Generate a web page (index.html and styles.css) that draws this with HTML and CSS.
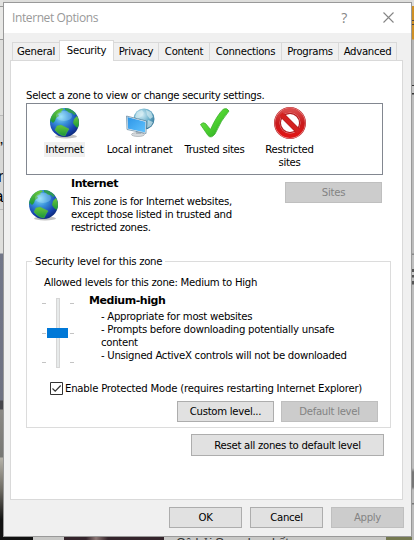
FILE: index.html
```html
<!DOCTYPE html>
<html lang="en">
<head>
<meta charset="utf-8">
<title>Internet Options</title>
<link rel="stylesheet" href="styles.css">
</head>
<body>
<svg class="defs" width="0" height="0" aria-hidden="true">
  <defs>
    <radialGradient id="ocean" cx=".38" cy=".3" r=".75">
      <stop offset="0" stop-color="#8fdcf5"/>
      <stop offset=".35" stop-color="#3a93dc"/>
      <stop offset=".75" stop-color="#1745b0"/>
      <stop offset="1" stop-color="#0c2776"/>
    </radialGradient>
    <radialGradient id="pale" cx=".4" cy=".3" r=".75">
      <stop offset="0" stop-color="#d5eef6"/>
      <stop offset=".5" stop-color="#6fb2cd"/>
      <stop offset="1" stop-color="#2b6e92"/>
    </radialGradient>
    <linearGradient id="land" x1="0" y1="0" x2="0" y2="1">
      <stop offset="0" stop-color="#6cc83c"/>
      <stop offset="1" stop-color="#18963a"/>
    </linearGradient>
    <linearGradient id="screen" x1="0" y1="0" x2="1" y2="1">
      <stop offset="0" stop-color="#2b93e6"/>
      <stop offset="1" stop-color="#62c4ff"/>
    </linearGradient>
    <linearGradient id="tick" x1="0" y1="0" x2="1" y2="1">
      <stop offset="0" stop-color="#7fea55"/>
      <stop offset=".5" stop-color="#4cd02f"/>
      <stop offset="1" stop-color="#219a25"/>
    </linearGradient>
    <linearGradient id="red" x1="0" y1="0" x2="0" y2="1">
      <stop offset="0" stop-color="#d94a4a"/>
      <stop offset=".5" stop-color="#c81a1c"/>
      <stop offset="1" stop-color="#e01515"/>
    </linearGradient>
    <symbol id="globe" viewBox="0 0 32 32">
      <ellipse cx="17" cy="29.4" rx="11" ry="2" fill="#777" opacity=".45"/>
      <circle cx="15.5" cy="15.5" r="14.5" fill="url(#ocean)"/>
      <path d="M4 7C6 4 9 1.700 13 1.200L15 2.500 12 4 13 5 9 7 10 9 7 11 6 14 4 16 2 14 1.200 16C1 12.500 2 9.500 4 7Z" fill="url(#land)"/>
      <path d="M16 1C21 1 25 4 27 7L25 8 23 6 20 6 18 4 16 3Z" fill="#2f9b55"/>
      <path d="M28 9C30.500 13 30.500 18 28.500 21L26 19 24 16 25 12Z" fill="url(#land)"/>
      <path d="M8 19 12 18 16 20 20 22 18 25 16 29 12 28 9 26 6 23Z" fill="url(#land)" stroke="#58bd45" stroke-width=".5"/>
      <ellipse cx="15" cy="9" rx="8" ry="5" fill="#c8f5ff" opacity=".28"/>
    </symbol>
  </defs>
</svg>
<div class="desktop">
  <div class="edge left"><span class="l1">’</span><span class="l2">r</span><span class="l3">a</span></div>
  <main class="dialog">
    <header class="titlebar">
      <h1>Internet Options</h1>
      <span class="help">?</span>
      <svg class="close" width="11" height="11" viewBox="0 0 11 11"><path d="M.5.5l10 10M10.500.5l-10 10" fill="none" stroke="#858585" stroke-width="1.100"/></svg>
    </header>
    <nav class="tabs">
      <span class="tab general">General</span><span class="tab active">Security</span><span class="tab privacy">Privacy</span><span class="tab content">Content</span><span class="tab connections">Connections</span><span class="tab programs">Programs</span><span class="tab advanced">Advanced</span>
    </nav>
    <section class="panel">
      <p class="intro">Select a zone to view or change security settings.</p>
      <ul class="zones">
        <li><svg width="32" height="32"><use href="#globe"/></svg><span class="selected">Internet</span></li>
        <li><svg width="32" height="32" viewBox="0 0 32 32">
          <circle cx="20" cy="12" r="10.500" fill="url(#pale)"/>
          <path d="M13 5l5-2 2 3-3 4-4 2-2-2zM22 3l5 2 2 5-3 2-3-4zM24 13l5 2-2 4-4 2z" fill="#d8eef2" opacity=".65"/>
          <ellipse cx="14" cy="27.500" rx="6.500" ry="2" fill="#d5d9dc" stroke="#9aa2a8" stroke-width=".6"/>
          <path d="M12 23h5v4h-5z" fill="#aeb6bb"/>
          <path d="M3 9.500 22 14.500 21.500 26 3.500 22Z" fill="url(#screen)" stroke="#e7edf0" stroke-width="1"/>
          <path d="M2.500 9 22.500 14 22 26.500 3 22.500Z" fill="none" stroke="#45718f" stroke-width=".6"/>
        </svg><span>Local intranet</span></li>
        <li><svg width="32" height="32" viewBox="0 0 32 32"><path d="M1.500 17.500Q4 14.500 6.500 16.500L11.500 22.500Q18 8 24.500 2Q28 .5 30 4Q22 13 16 27Q12 32 9 28.500Z" fill="url(#tick)" stroke="#3cae2d" stroke-width=".8"/></svg><span>Trusted sites</span></li>
        <li><svg width="32" height="32" viewBox="0 0 32 32">
          <circle cx="16" cy="16" r="12.500" fill="#fff" stroke="#b51d20" stroke-width="7"/>
          <circle cx="16" cy="16" r="12.800" fill="none" stroke="#e99" stroke-width="5.200"/>
          <path d="M7.500 7.500l17 17" stroke="#b51d20" stroke-width="5.500"/>
          <circle cx="16" cy="16" r="12.700" fill="none" stroke="url(#red)" stroke-width="4.400"/>
          <path d="M7 7l18 18" stroke="#d4201f" stroke-width="4.200"/>
        </svg><span>Restricted<br>sites</span></li>
      </ul>
      <div class="zone-info">
        <svg width="32" height="32"><use href="#globe"/></svg>
        <div class="zone-text"><h2>Internet</h2><p>This zone is for Internet websites,<br>except those listed in trusted and<br>restricted zones.</p></div>
        <button class="btn sites" disabled>Sites</button>
      </div>
      <fieldset class="level">
        <legend>Security level for this zone</legend>
        <p class="allowed">Allowed levels for this zone: Medium to High</p>
        <div class="level-row">
          <svg class="slider" width="30" height="72" viewBox="0 0 30 72">
            <path d="M0 7.500h4M28 7.500h4M0 37.500h4M28 37.500h4M0 66.500h4M28 66.500h4" stroke="#c4c4c4"/>
            <rect x="14.500" y="2.500" width="3" height="69" fill="#e7eaea" stroke="#d6d6d6"/>
            <rect x="5" y="32" width="21" height="10" fill="#0078d7"/>
          </svg>
          <div class="level-text"><h2>Medium-high</h2>
            <p>- Appropriate for most websites<br>- Prompts before downloading potentially unsafe<br>content<br>- Unsigned ActiveX controls will not be downloaded</p>
          </div>
        </div>
        <label class="protected"><svg width="13" height="13" viewBox="0 0 13 13"><path d="M.5.5h12v12H.5z" fill="#fff" stroke="#333"/><path d="M2.500 6.500l2.700 2.700L10.700 3.500" fill="none" stroke="#333" stroke-width="1.200"/></svg><span>Enable Protected Mode (requires restarting Internet Explorer)</span></label>
        <div class="level-buttons"><button class="btn">Custom level...</button><button class="btn" disabled>Default level</button></div>
      </fieldset>
      <button class="btn reset">Reset all zones to default level</button>
    </section>
    <footer class="actions"><button class="btn">OK</button><button class="btn">Cancel</button><button class="btn" disabled>Apply</button></footer>
  </main>
  <div class="edge right"></div>
  <div class="below"><span>Cô bải Sang ban kết</span></div>
</div>
</body>
</html>
```
FILE: styles.css
```css
* { box-sizing: border-box; }
body, h1, h2, p, ul, fieldset { margin: 0; padding: 0; }
body {
  width: 414px; height: 540px; overflow: hidden;
  font: 11.25px/13px "DejaVu Sans Condensed", "DejaVu Sans", sans-serif;
  letter-spacing: -.28px; color: #000; background: #dededc;
  white-space: nowrap;
}
.defs { position: absolute; }
svg { display: block; flex: none; overflow: visible; }
.desktop {
  display: grid; grid-template: 2px 535px 3px / 3px 409px 2px;
  width: 414px; height: 540px; overflow: hidden;
}
.edge { grid-row: 1 / 4; overflow: hidden; }
.left {
  grid-column: 1; font: 16px/20px "Liberation Sans", sans-serif;
  background: linear-gradient(#e2e2e0 0 6px, #999 6px 7px, #e8e8e6 7px 39px, #999 39px 40px, #dededc 40px 115px, #bbb 115px 116px, #d8d8d6 116px 209px, #bbb 209px 210px, #dededc 210px 253px, #727789 254px, #6f7282 400px, #45454b 401px 409px, #8b8985 410px, #777774 457px, #b5b2a9 458px, #6d6a62 490px, #111 520px);
}
.left span { display: block; height: 20px; direction: rtl; width: 3px; }
.l1 { margin-top: 139px; }
.l2 { margin-top: 8px; }
.right {
  grid-column: 3;
  background: linear-gradient(#ddd 0 6px, #cf9025 6px 20px, #4e4336 20px 21px, #cf9025 21px 24px, #4e4336 24px 25px, #cf9025 25px 39px, #b5b5b5 40px 85px, #333 85px 86px, #c6c6c6 86px 93px, #333 93px 94px, #bdbdbd 95px 253px, #888 254px 255px, #c0c0c0 255px 269px, #555 269px 272px, #ccc 272px 275px, #555 275px 277px, #bbb 278px 281px, #555 281px 284px, #bdbdbd 285px 468px, #777 472px 487px, #bdbdbd 490px 503px, #777 503px 504px, #bdbdbd 505px);
}
.below {
  grid-column: 2; grid-row: 3; overflow: hidden; padding-left: 173px;
  font: 13px/16px "Liberation Sans", sans-serif; color: #333;
  background: linear-gradient(90deg, #111 0 30px, #c8c8c6 30px 61px, #34242b 61px 83px, #8b7674 93px, #34242b 105px 161px, #c8c8c6 161px 383px, #747850 383px 409px);
}
.below span { display: block; margin-top: -2px; }
.dialog {
  grid-column: 2; grid-row: 2; display: flex; flex-direction: column;
  height: 535px; border: 1px solid #999; background: #f0f0f0;
}
.titlebar { display: flex; align-items: center; height: 30px; background: #fff; padding: 0 17px 0 8px; }
h1 { flex: 1; font: 12px/16px "Open Sans", sans-serif; letter-spacing: -.4px; color: #999; }
.help { font: 14px/16px "Open Sans", sans-serif; color: #858585; margin-right: 36px; }
.close { margin-bottom: 2px; }
.tabs { display: flex; align-items: flex-end; height: 28px; margin: 0 0 -1px 8px; position: relative; }
.tab {
  height: 19px; border: 1px solid #d9d9d9; border-left: 0; border-bottom: 0;
  text-align: center; line-height: 18px; width: 57px;
}
.general { width: 48px; border-left: 1px solid #d9d9d9; }
.tab.active { width: 55px; height: 21px; background: #fff; line-height: 20px; border-left: 1px solid #d9d9d9; margin-left: -1px; }
.privacy { width: 45px; }
.content { width: 51px; }
.connections { width: 72px; }
.programs { width: 57px; }
.advanced { width: 58px; }
.panel {
  width: 393px; height: 440px; margin-left: 6px; padding: 0 11px 0 15px;
  border: 1px solid #d9d9d9; background: #fff;
}
.intro { padding-top: 28px; height: 42px; }
.zones {
  display: grid; grid-template-columns: repeat(4, 75px); width: 357px; height: 72px;
  list-style: none; border: 1px solid #828790; padding-top: 3px;
}
.zones li { display: flex; flex-direction: column; align-items: center; text-align: center; gap: 3px; }
.zones li span { line-height: 13px; padding: 1px 2px; }
.selected { background: #f0f0f0; }
.zone-info { display: flex; height: 80px; padding: 2px 0 0 2px; }
.zone-info > svg { margin-top: 12px; }
.zone-text { width: 214px; margin-left: 11px; }
h2 { font: bold 11px/13px "DejaVu Sans", sans-serif; letter-spacing: -.45px; }
.zone-text p { margin-top: 5px; }
.btn {
  font: inherit; letter-spacing: inherit; color: #000; height: 21px; padding: 0;
  background: #e1e1e1; border: 1px solid #adadad; width: 97px;
}
.btn:disabled { color: #838383; background: #ccc; border-color: #bfbfbf; }
.sites { margin-top: 5px; }
.level { width: 365px; height: 173px; border: 1px solid #dcdcdc; min-width: 0; }
legend { margin-left: 5px; padding: 0 3px; height: 13px; }
.allowed { padding: 8px 0 0 17px; }
.level-row { display: flex; margin-left: 15px; height: 81px; padding-top: 5px; }
.slider { margin-top: 2px; }
.level-text { margin-left: 17px; }
.level-text p { margin: 3px 0 0 12px; }
.protected { display: flex; gap: 2px; margin: 12px 0 0 23px; height: 13px; }
.protected span { letter-spacing: -.22px; }
.level-buttons { display: flex; gap: 7px; margin: 6px 0 0 150px; }
.reset { display: block; width: 193px; height: 22px; margin: 6px 0 0 165px; }
.actions { display: flex; gap: 8px; margin: 7px 0 0 165px; }
.actions .btn { width: 73px; }
```
